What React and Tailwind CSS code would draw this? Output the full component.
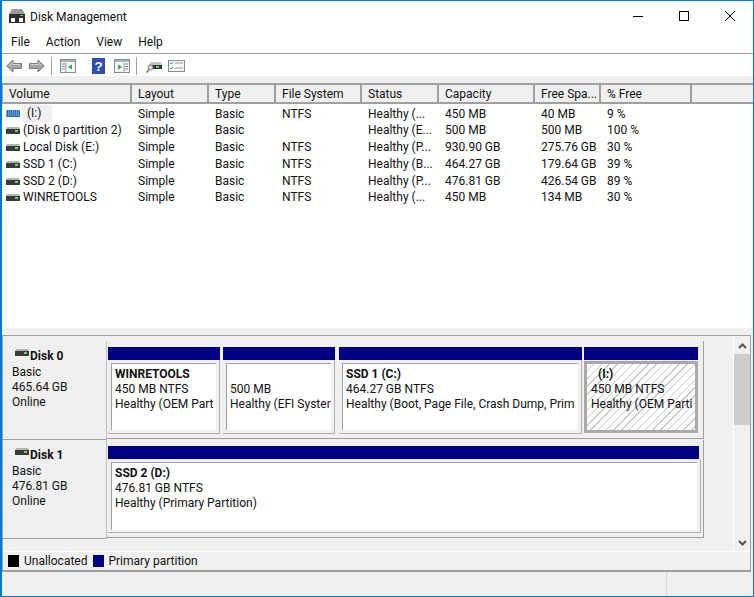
import React from "react";

const columns = [
  { label: "Volume", w: "w-[130px]" },
  { label: "Layout", w: "w-[77px]" },
  { label: "Type", w: "w-[67px]" },
  { label: "File System", w: "w-[86px]" },
  { label: "Status", w: "w-[77px]" },
  { label: "Capacity", w: "w-[96px]" },
  { label: "Free Spa...", w: "w-[66px]" },
  { label: "% Free", w: "w-[91px]" },
];

const rows = [
  ["(I:)", "Simple", "Basic", "NTFS", "Healthy (...", "450 MB", "40 MB", "9 %"],
  ["(Disk 0 partition 2)", "Simple", "Basic", "", "Healthy (E...", "500 MB", "500 MB", "100 %"],
  ["Local Disk (E:)", "Simple", "Basic", "NTFS", "Healthy (P...", "930.90 GB", "275.76 GB", "30 %"],
  ["SSD 1 (C:)", "Simple", "Basic", "NTFS", "Healthy (B...", "464.27 GB", "179.64 GB", "39 %"],
  ["SSD 2 (D:)", "Simple", "Basic", "NTFS", "Healthy (P...", "476.81 GB", "426.54 GB", "89 %"],
  ["WINRETOOLS", "Simple", "Basic", "NTFS", "Healthy (...", "450 MB", "134 MB", "30 %"],
];

function DiskIcon({ hatched }) {
  if (hatched) {
    return (
      <svg width="14" height="7" viewBox="0 0 14 7" className="shrink-0">
        <rect width="14" height="7" fill="#2f6fb5" />
        <path d="M0 1h14M0 3h14M0 5h14" stroke="#a5cdf0" strokeDasharray="1 1" />
      </svg>
    );
  }
  return (
    <svg width="14" height="7" viewBox="0 0 14 7" className="shrink-0">
      <path d="M1 0h12l1 2H0z" fill="#b4b4b4" />
      <rect y="2" width="14" height="5" fill="#3a3a3a" />
      <rect x="9" y="3" width="3" height="2" fill="#62d862" />
    </svg>
  );
}

function Toolbar() {
  return (
    <div className="h-[22px] shrink-0 flex items-center pl-[4px] pt-[1px]">
      <svg width="16" height="14" viewBox="0 0 16 14">
        <path d="M.7 7L7 1v3.500h8.500v5H7V13z" fill="#a4a4a4" stroke="#7b7b7b" />
        <path d="M3 7l3.500-3v1.500H14" stroke="#d0d0d0" fill="none" />
      </svg>
      <svg width="16" height="14" viewBox="0 0 16 14" className="ml-[7px]">
        <path d="M15.300 7L9 1v3.500H.5v5H9V13z" fill="#a4a4a4" stroke="#7b7b7b" />
        <path d="M2 5.500h8V4l3 3" stroke="#d0d0d0" fill="none" />
      </svg>
      <div className="w-px h-[18px] bg-[#a0a0a0] ml-[6px]" />
      <svg width="16" height="14" viewBox="0 0 16 14" className="ml-[8px]">
        <rect x=".5" y=".5" width="15" height="13" fill="#f7f7f7" stroke="#8a8a8a" />
        <rect x="1" y="1" width="14" height="2" fill="#a9b3bb" />
        <path d="M2 5h3M2 7.500h3M2 10h3" stroke="#6f8ea8" />
        <path d="M6 3.500v10" stroke="#9a9a9a" />
        <path d="M12 5.500v5L8 8z" fill="#2aa84a" />
      </svg>
      <svg width="13" height="16" viewBox="0 0 13 16" className="ml-[16px]">
        <rect width="13" height="16" fill="#2f4fb0" />
        <text x="6.500" y="13" textAnchor="middle" fontSize="13.500" fontWeight="700" fill="#f4f7ff" fontFamily="Liberation Sans, sans-serif">?</text>
      </svg>
      <svg width="16" height="14" viewBox="0 0 16 14" className="ml-[9px]">
        <rect x=".5" y=".5" width="15" height="13" fill="#f7f7f7" stroke="#8a8a8a" />
        <rect x="1" y="1" width="14" height="2" fill="#a9b3bb" />
        <path d="M10 3.500v10" stroke="#9a9a9a" />
        <path d="M11 5h3M11 7.500h3M11 10h3" stroke="#6f8ea8" />
        <path d="M4 5.500v5L8 8z" fill="#2aa84a" />
      </svg>
      <div className="w-px h-[18px] bg-[#a0a0a0] ml-[6px]" />
      <svg width="16" height="14" viewBox="0 0 16 14" className="ml-[9px]">
        <path d="M5 3h10l1 3H3z" fill="#c4c4c4" />
        <rect x="3" y="6" width="13" height="4" fill="#333" />
        <rect x="10" y="7" width="3" height="2" fill="#4fe04f" />
        <circle cx="4.500" cy="8.500" r="2.500" fill="#cfe0ef" stroke="#7d7d7d" />
        <path d="M3 10.500L.5 13.500" stroke="#8a6a3a" strokeWidth="1.500" />
      </svg>
      <svg width="17" height="12" viewBox="0 0 17 12" className="ml-[6px]">
        <rect x=".5" y=".5" width="16" height="11" fill="#f7f7f7" stroke="#8a8a8a" />
        <path d="M2 3l1 1 2-2M2 8l1 1 2-2" stroke="#2f7fd8" fill="none" />
        <path d="M7 3h8M7 8h8" stroke="#9a9a9a" />
      </svg>
    </div>
  );
}

function HeaderRow() {
  return (
    <div className="h-[21px] flex bg-[#f0f0f0] border-t-2 border-b-2 border-l border-[#a0a0a0]">
      {columns.map((c, i) => (
        <div
          key={c.label}
          className={`${i === 0 ? "w-[129px]" : c.w} shrink-0 border-r-2 border-[#a0a0a0] pl-[6px] leading-[19px]`}
        >
          {c.label}
        </div>
      ))}
      <div className="flex-1" />
    </div>
  );
}

function VolumeRow({ row, index }) {
  return (
    <div className="h-[16.8px] flex leading-[17px]">
      {row.map((cell, i) =>
        i === 0 ? (
          <div key={i} className={`${columns[0].w} shrink-0 flex items-center pl-[4px] gap-[3px]`}>
            <DiskIcon hatched={index === 0} />
            <span className={index === 0 ? "bg-[#f0f0f0] pl-[5px] pr-[11px] -ml-[1px]" : ""}>{cell}</span>
          </div>
        ) : (
          <div key={i} className={`${columns[i].w} shrink-0 pl-[6px] whitespace-nowrap`}>
            {cell}
          </div>
        )
      )}
    </div>
  );
}

function DiskLabel({ name, size }) {
  return (
    <div className="w-[104px] shrink-0 bg-[#f0f0f0] border-r border-b border-r-[#c0c0c0] border-b-[#a0a0a0] pl-[9px] pt-[8px] leading-[15px]">
      <div className="flex font-bold h-[16px]">
        <div className="ml-[3px] mr-[1px]">
          <DiskIcon />
        </div>
        <span>{name}</span>
      </div>
      <div>Basic</div>
      <div>{size}</div>
      <div>Online</div>
    </div>
  );
}

function Partition({ w, barGap, title, lines, selected, nameIndent }) {
  return (
    <div className={`${w} shrink-0 flex flex-col`}>
      <div className={`h-[13px] bg-[#000080] ${barGap}`} />
      {selected ? (
        <div className="h-[72px] mt-[1px] border-[3px] border-[#a9a9a9] pl-[4px] pt-[3px] leading-[15px] overflow-hidden whitespace-nowrap bg-[repeating-linear-gradient(135deg,#ffffff_0px,#ffffff_4.5px,#c8c8c8_4.5px,#c8c8c8_5.5px)]">
          <div className={`font-bold h-[15px] ${nameIndent}`}>{title}</div>
          {lines.map((l) => (
            <div key={l}>{l}</div>
          ))}
        </div>
      ) : (
        <div className={`h-[74px] pl-[3px] pt-[3px] pr-[3px] border-b border-r border-[#b0b0b0] ${barGap}`}>
          <div className="h-[67px] bg-white border-l border-t border-[#a0a0a0] pl-[3px] pt-[3px] leading-[15px] overflow-hidden whitespace-nowrap">
            <div className="font-bold h-[15px]">{title}</div>
            {lines.map((l) => (
              <div key={l}>{l}</div>
            ))}
          </div>
        </div>
      )}
    </div>
  );
}

export default function App() {
  return (
    <div
      className="w-[754px] h-[597px] flex flex-col bg-white border border-[#0078d7] border-l-2 text-[12px] text-[#111111] overflow-hidden"
      style={{ fontFamily: "Roboto, sans-serif" }}
    >
      {/* title bar */}
      <div className="h-[30px] shrink-0 flex items-center">
        <svg width="16" height="14" viewBox="0 0 16 14" className="ml-[7px]">
          <path d="M3 0h10l3 5H0z" fill="#9a9a9a" />
          <rect y="5" width="16" height="3" fill="#2e2e2e" />
          <rect x="11" y="6" width="3" height="1" fill="#5fd35f" />
          <path d="M0 8h16v6H0z" fill="#2e2e2e" />
          <rect x="2" y="9" width="4" height="4" fill="#fff" />
          <rect x="10" y="9" width="4" height="4" fill="#fff" />
        </svg>
        <span className="ml-[5px] pt-[1px]">Disk Management</span>
        <div className="ml-auto flex items-center">
          <div className="w-[46px] flex justify-center">
            <div className="w-[10px] h-px bg-black" />
          </div>
          <div className="w-[46px] flex justify-center">
            <div className="w-[10px] h-[10px] border border-black" />
          </div>
          <div className="w-[46px] flex justify-center">
            <svg width="10" height="10" viewBox="0 0 10 10">
              <path d="M0 0l10 10M10 0L0 10" stroke="#000" />
            </svg>
          </div>
        </div>
      </div>

      {/* menu */}
      <div className="h-[23px] shrink-0 flex items-center gap-[16px] pl-[9px] border-b border-[#a0a0a0]">
        <span>File</span>
        <span>Action</span>
        <span>View</span>
        <span>Help</span>
      </div>

      <Toolbar />
      <div className="h-[7px] shrink-0 bg-[#f0f0f0]" />

      {/* volume list */}
      <div className="h-[245px] shrink-0 overflow-hidden">
        <HeaderRow />
        <div className="pt-[1.5px]">
          {rows.map((r, i) => (
            <VolumeRow key={r[0]} row={r} index={i} />
          ))}
        </div>
      </div>
      <div className="h-[7px] shrink-0 bg-[#f0f0f0]" />

      {/* graphical view */}
      <div className="flex-1 flex flex-col bg-[#f0f0f0] min-h-0">
        <div className="h-[237px] shrink-0 mr-[2px] flex flex-col border-t border-l border-r border-[#a0a0a0]">
          <div className="flex flex-1 min-h-0">
            <div className="flex-1 min-w-0 pt-[5px]">
              <div className="h-[99px] flex">
                <DiskLabel name="Disk 0" size="465.64 GB" />
                <div className="w-[597px] h-[98px] shrink-0 border-r border-b border-[#a0a0a0] pl-[1px] pt-[6px] flex">
                  <Partition w="w-[115px]" barGap="mr-[3px]" title="WINRETOOLS" lines={["450 MB NTFS", "Healthy (OEM Part"]} />
                  <Partition w="w-[116px]" barGap="mr-[4px]" title="" lines={["500 MB", "Healthy (EFI Systen"]} />
                  <Partition w="w-[245px]" barGap="mr-[2px]" title="SSD 1  (C:)" lines={["464.27 GB NTFS", "Healthy (Boot, Page File, Crash Dump, Prim"]} />
                  <Partition w="w-[114px]" title="(I:)" nameIndent="pl-[7px]" lines={["450 MB NTFS", "Healthy (OEM Parti"]} selected />
                </div>
              </div>
              <div className="h-[99px] flex">
                <DiskLabel name="Disk 1" size="476.81 GB" />
                <div className="w-[597px] h-[98px] shrink-0 border-r border-b border-[#a0a0a0] pl-[1px] pt-[6px]">
                  <div className="h-[13px] w-[591px] bg-[#000080]" />
                  <div className="w-[593px] h-[74px] pl-[3px] pt-[3px] pr-[3px] border-r border-b border-[#b0b0b0]">
                    <div className="h-[68px] bg-white border-l border-t border-[#a0a0a0] pl-[3px] pt-[3px] leading-[15px]">
                      <div className="font-bold">SSD 2  (D:)</div>
                      <div>476.81 GB NTFS</div>
                      <div>Healthy (Primary Partition)</div>
                    </div>
                  </div>
                </div>
              </div>
            </div>

            {/* scrollbar */}
            <div className="w-[17px] shrink-0 border-l border-white flex flex-col items-center">
              <svg width="9" height="6" viewBox="0 0 9 6" className="mt-[7px]">
                <path d="M1 5l3.500-3.500L8 5" stroke="#555" strokeWidth="2" fill="none" />
              </svg>
              <div className="w-full h-[71px] mt-[5px] bg-[#cdcdcd]" />
              <svg width="9" height="6" viewBox="0 0 9 6" className="mt-auto mb-[5px]">
                <path d="M1 1l3.500 3.500L8 1" stroke="#555" strokeWidth="2" fill="none" />
              </svg>
            </div>
          </div>

          {/* legend */}
          <div className="h-[21px] shrink-0 border-t border-t-white border-b-2 border-b-[#a0a0a0] flex items-center pl-[5px]">
            <div className="w-[11px] h-[12px] bg-black" />
            <span className="ml-[5px]">Unallocated</span>
            <div className="w-[11px] h-[12px] bg-[#000080] ml-[6px]" />
            <span className="ml-[4px]">Primary partition</span>
          </div>
        </div>

        {/* status bar */}
        <div className="flex-1 flex justify-end">
          <div className="w-[87px] border-l border-[#d8d8d8]" />
        </div>
      </div>
    </div>
  );
}
